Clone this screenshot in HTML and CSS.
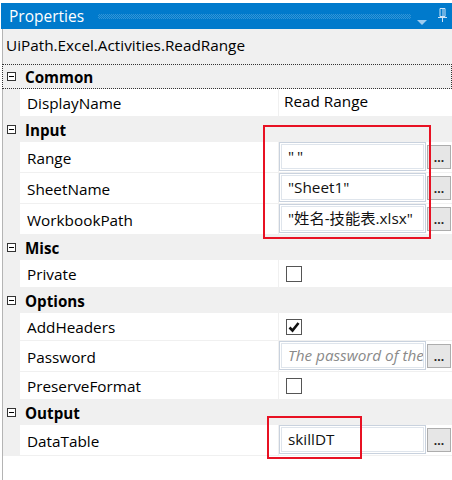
FILE: index.html
```html
<!DOCTYPE html>
<html>
<head>
<meta charset="utf-8">
<link rel="stylesheet" href="styles.css">
</head>
<body>
<div class="window">
  <div class="titlebar">
    <span class="title">Properties</span>
    <span class="grip"></span>
    <svg class="tb-arrow" width="10" height="5" viewBox="0 0 10 5"><path d="M0 0H10L5 5Z" fill="#9ccbf0"/></svg>
    <svg class="tb-pin" width="10" height="14" viewBox="0 0 10 14"><path d="M3 0.5H8V8.5H3Z M6 1V8" fill="none" stroke="#cfe4f6" stroke-width="1"/><path d="M1 9.5H10" stroke="#cfe4f6" stroke-width="1"/><path d="M5.5 10V14" stroke="#cfe4f6" stroke-width="1"/></svg>
  </div>
  <div class="panel">
    <div class="typename">UiPath.Excel.Activities.ReadRange</div>
    <div class="grid">
      <div class="cat focused"><span class="toggle"></span>Common</div>
      <div class="row"><div class="gutter"></div><div class="name">DisplayName</div><div class="value"><span class="plain">Read Range</span></div></div>

      <div class="cat"><span class="toggle"></span>Input</div>
      <div class="row tall"><div class="gutter"></div><div class="name">Range</div><div class="value"><div class="box"><span class="quotes">""</span></div><div class="btn">...</div></div></div>
      <div class="row tall"><div class="gutter"></div><div class="name">SheetName</div><div class="value"><div class="box">"Sheet1"</div><div class="btn">...</div></div></div>
      <div class="row tall"><div class="gutter"></div><div class="name">WorkbookPath</div><div class="value"><div class="box">"姓名-技能表.xlsx"</div><div class="btn">...</div></div></div>

      <div class="cat"><span class="toggle"></span>Misc</div>
      <div class="row"><div class="gutter"></div><div class="name">Private</div><div class="value"><span class="check"></span></div></div>

      <div class="cat"><span class="toggle"></span>Options</div>
      <div class="row"><div class="gutter"></div><div class="name">AddHeaders</div><div class="value"><span class="check"><svg width="14" height="14" viewBox="0 0 14 14"><path d="M2.5 7.5L5.5 10.5L11.5 3" fill="none" stroke="#111" stroke-width="2.6"/></svg></span></div></div>
      <div class="row tall"><div class="gutter"></div><div class="name">Password</div><div class="value"><div class="box placeholder"><span class="clip">The password of the workbook</span></div><div class="btn">...</div></div></div>
      <div class="row"><div class="gutter"></div><div class="name">PreserveFormat</div><div class="value"><span class="check"></span></div></div>

      <div class="cat"><span class="toggle"></span>Output</div>
      <div class="row tall"><div class="gutter"></div><div class="name">DataTable</div><div class="value"><div class="box">skillDT</div><div class="btn">...</div></div></div>
    </div>
  </div>
  <div class="mark mark-input"></div>
  <div class="mark mark-output"></div>
</div>
</body>
</html>
```

FILE: styles.css
```css
* { box-sizing: border-box; }
html, body { margin: 0; padding: 0; }
body {
  background: #ffffff;
  font-family: "Open Sans", "Noto Sans", "Noto Sans CJK SC", sans-serif;
  color: #000;
  width: 452px;
  height: 480px;
  overflow: hidden;
}
.window {
  position: relative;
  padding: 3px 0 0 1px;
  height: 480px;
}
.titlebar {
  height: 26px;
  background: #007acc;
  display: flex;
  align-items: center;
  padding-left: 8px;
}
.title {
  color: #fff;
  font-size: 15.5px;
  line-height: 26px;
}
.grip {
  margin-left: 14px;
  width: 313px;
  height: 5px;
  margin-top: 1px;
  background-image: conic-gradient(rgba(255,255,255,0.2) 25%, transparent 0 50%, rgba(255,255,255,0.2) 0 75%, transparent 0);
  background-size: 2px 2px;
}
.tb-arrow { margin-left: 6px; margin-top: 12px; }
.tb-pin { margin-left: 10px; margin-top: -2px; }
.panel {
  margin-left: 1px;
  border-left: 1px solid #b4b4b4;
  height: 451px;
}
.typename {
  height: 35px;
  background: #f0f0f0;
  padding-left: 3px;
  font-size: 15.3px;
  line-height: 33px;
  color: #000;
}
.grid { background: #fff; }
.cat {
  height: 25px;
  background: #f0f0f0;
  display: flex;
  align-items: center;
  padding-left: 4px;
  font-weight: 700;
  font-size: 15.2px;
}
.cat.focused {
  margin-left: -1px;
  outline: 1px dotted #333;
  outline-offset: -1px;
}
.cat.focused .toggle { margin-left: 1px; }
.toggle {
  position: relative;
  width: 9px;
  height: 9px;
  border: 1px solid #333;
  background: #fff;
  margin-right: 9px;
  flex: none;
}
.toggle::after {
  content: "";
  position: absolute;
  left: 1px;
  top: 3px;
  width: 5px;
  height: 1px;
  background: #000;
}
.row {
  display: flex;
  height: 28px;
  border-bottom: 1px solid #f0f0f0;
}
.row.tall { height: 31px; }
.gutter {
  width: 17px;
  background: #f0f0f0;
  flex: none;
}
.name {
  width: 259px;
  flex: none;
  border-right: 1px solid #f0f0f0;
  padding-left: 7px;
  font-size: 15.3px;
  display: flex;
  align-items: center;
  padding-top: 1px;
}
.value {
  flex: 1;
  display: flex;
  align-items: flex-start;
  font-size: 15.3px;
}
.plain {
  padding-left: 5px;
  line-height: 25px;
}
.box {
  width: 147px;
  height: 29px;
  border: 1px solid #c9d2de;
  box-shadow: inset 0 0 0 1px #fff, inset 0 0 0 2px #dfe5ec;
  padding-left: 8px;
  line-height: 27px;
  white-space: nowrap;
  overflow: hidden;
  color: #111;
}
.quotes { letter-spacing: 3px; }
.box.placeholder {
  font-style: italic;
  color: #8a8a8a;
  padding-right: 2px;
}
.clip {
  display: block;
  overflow: hidden;
  white-space: nowrap;
}
.btn {
  width: 24px;
  height: 24px;
  margin: 3px 0 0 1px;
  background: #e6e6e6;
  border: 1px solid #adadad;
  font-size: 12px;
  font-weight: 700;
  text-align: center;
  line-height: 24px;
  color: #222;
}
.check {
  width: 16px;
  height: 16px;
  margin: 6px 0 0 7px;
  border: 1px solid #555;
  background: #fff;
  display: flex;
  align-items: center;
  justify-content: center;
}
.mark {
  position: absolute;
  border: 2px solid #e81123;
}
.mark-input { left: 263px; top: 125px; width: 168px; height: 114px; }
.mark-output { left: 267px; top: 416px; width: 95px; height: 43px; }
```
